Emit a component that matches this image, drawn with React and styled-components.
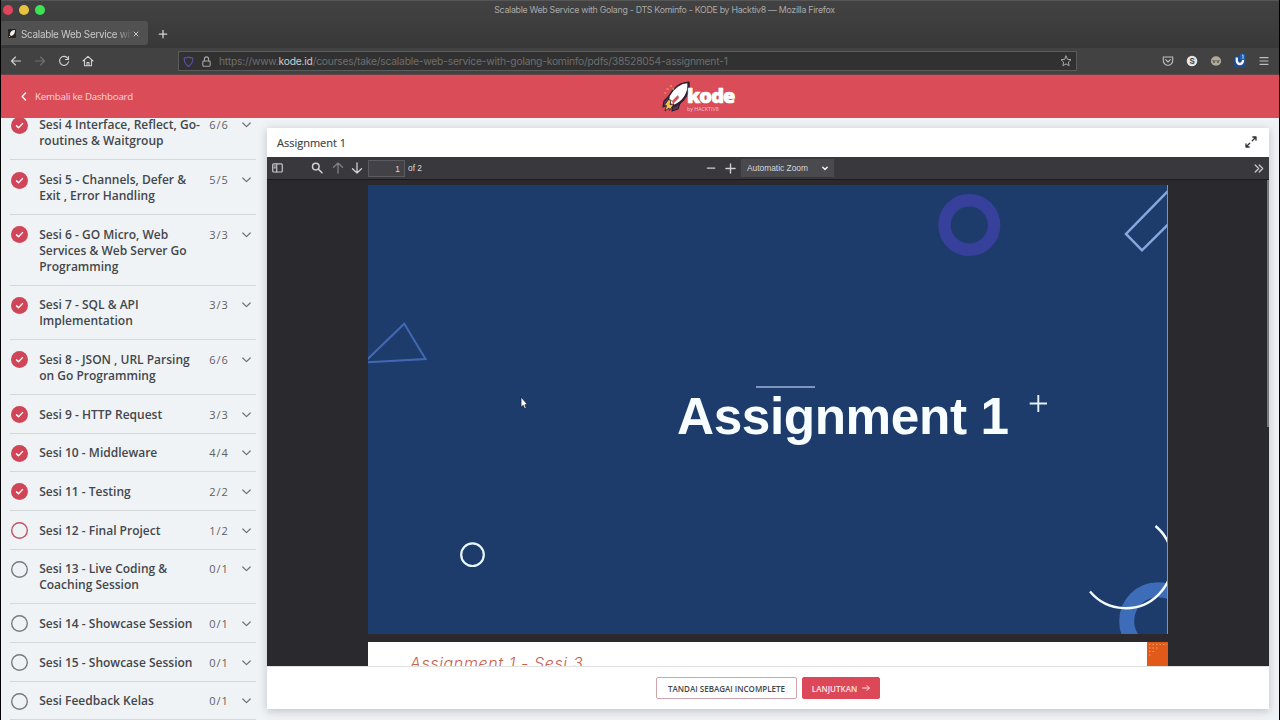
import React from "react";
import styled, { createGlobalStyle, css } from "styled-components";

const GlobalStyle = createGlobalStyle`
  *, *::before, *::after { box-sizing: border-box; }
  body { margin: 0; background: #000; font-family: "Open Sans", "Noto Sans", sans-serif; }
  svg { display: block; flex: none; }
`;

const Screen = styled.div`
  width: 1280px;
  height: 720px;
  overflow: hidden;
  display: flex;
  flex-direction: column;
  padding: 0 1px;
  background: #000;
`;

/* Browser window chrome */
const TitleBar = styled.div`
  height: 21px;
  flex: none;
  display: flex;
  align-items: center;
  padding: 0 2px 3px;
  border-top: 1px solid #565656;
  background: linear-gradient(#424242, #3e3e3e);
`;
const Lights = styled.div`
  display: flex;
  gap: 6px;
  width: 120px;
`;
const Light = styled.span`
  width: 10px;
  height: 10px;
  border-radius: 50%;
  background: ${(p) => p.$color};
`;
const WindowTitle = styled.div`
  flex: 1;
  padding-right: 71px;
  text-align: center;
  font: 400 8.8px/12px Inter, sans-serif;
  letter-spacing: -0.285px;
  color: #a9a9a9;
`;
const TabStrip = styled.div`
  height: 27px;
  flex: none;
  display: flex;
  background: linear-gradient(#3e3e3e, #383838);
`;
const Tab = styled.div`
  width: 147px;
  height: 24px;
  display: flex;
  align-items: center;
  padding: 1px 5px 0 7px;
  border-radius: 0 3px 3px 0;
  background: #515151;
`;
const TabLabel = styled.div`
  width: 112px;
  margin-left: 5px;
  overflow: hidden;
  white-space: nowrap;
  font: 400 9.9px/14px Inter, sans-serif;
  letter-spacing: -0.27px;
  color: #c9c9c9;
  mask-image: linear-gradient(90deg, #000 84%, transparent 100%);
`;
const NewTab = styled.div`
  padding: 8px 0 0 10px;
`;
const NavBar = styled.div`
  height: 27px;
  flex: none;
  display: flex;
  align-items: center;
  padding: 0 9px;
  background: #424242;
  border-bottom: 1px solid #6a4548;
`;
const NavButtons = styled.div`
  width: 168px;
  display: flex;
  align-items: center;
  gap: 12px;
`;
const UrlBar = styled.div`
  width: 899px;
  height: 20px;
  display: flex;
  align-items: center;
  gap: 7px;
  padding: 0 4px;
  border: 1px solid #5c5c5c;
  background: #313131;
`;
const Url = styled.div`
  flex: 1;
  font: 400 10.3px/16px Inter, sans-serif;
  letter-spacing: -0.22px;
  color: #6e6e6e;
  white-space: nowrap;
  b { font-weight: 400; color: #cccccc; }
`;
const Extensions = styled.div`
  margin-left: auto;
  display: flex;
  align-items: center;
  gap: 12px;
`;

/* Course site */
const SiteHeader = styled.header`
  height: 43px;
  flex: none;
  display: flex;
  align-items: center;
  background: #d94c58;
`;
const BackLink = styled.div`
  width: 660px;
  display: flex;
  align-items: center;
  gap: 8px;
  padding-left: 20px;
  font-size: 9.7px;
  letter-spacing: -0.2px;
  line-height: 14px;
  color: #ffd9dc;
`;
const Logo = styled.div`
  display: flex;
`;
const LogoText = styled.div`
  display: flex;
  flex-direction: column;
  margin-left: -5px;
  padding-top: 5px;
  color: #fff;
`;
const LogoName = styled.span`
  font: 800 20px/20px "Open Sans", sans-serif;
  letter-spacing: -0.9px;
  -webkit-text-stroke: 0.7px #fff;
`;
const LogoBy = styled.span`
  font: 400 5.3px/7px "Open Sans", sans-serif;
  color: #f9c3c8;
`;
const Body = styled.main`
  flex: 1;
  min-height: 0;
  display: flex;
  background: #eff2f4;
`;

const Sidebar = styled.aside`
  width: 266px;
  overflow: hidden;
  padding: 0 11px 0 9px;
  background: #f0f3f5;
`;
const SessionList = styled.div`
  margin-top: -12.3px;
`;
const SessionRow = styled.div`
  display: flex;
  align-items: flex-start;
  padding: 11.67px 0 10px 1px;
  border-bottom: 1px solid #d5d9dc;
`;
const StatusDot = styled.span`
  width: 17px;
  height: 17px;
  flex: none;
  display: flex;
  align-items: center;
  justify-content: center;
  margin: -0.5px 11.2px -0.5px 0;
  border-radius: 50%;
  ${(p) =>
    p.$status === "done"
      ? css`background: #d04557;`
      : css`box-shadow: inset 0 0 0 1.4px ${p.$status === "partial" ? "#bf5566" : "#757c81"};`}
`;
const SessionName = styled.span`
  width: 170px;
  font-weight: 600;
  font-size: 12px;
  line-height: 16px;
  color: #43474c;
  white-space: pre-line;
`;
const SessionCount = styled.span`
  width: 33.3px;
  font-size: 11px;
  line-height: 16px;
  letter-spacing: 1px;
  color: #5d6165;
`;
const ChevronBox = styled.span`
  padding-top: 5px;
`;

const Panel = styled.section`
  width: 1002px;
  height: 581px;
  margin-top: 10px;
  display: flex;
  flex-direction: column;
  background: #fff;
  box-shadow: 0 2px 8px rgba(60, 70, 80, 0.28);
`;
const PanelHeader = styled.div`
  height: 29px;
  flex: none;
  display: flex;
  align-items: center;
  justify-content: space-between;
  padding: 0 12.5px 1px 10px;
  font-size: 11px;
  color: #3d4145;
  -webkit-text-stroke: 0.15px #3d4145;
`;
const PdfToolbar = styled.div`
  height: 23px;
  flex: none;
  display: flex;
  align-items: center;
  padding: 0 5px;
  background: #38383d;
  border-bottom: 1.5px solid #1b1b1e;
  font: 400 8.4px/12px "Liberation Sans", sans-serif;
  color: #d8d8da;
`;
const ToolGroup = styled.div`
  display: flex;
  align-items: center;
  width: ${(p) => p.$width}px;
`;
const PageInput = styled.div`
  width: 37px;
  height: 17px;
  margin: 0 3px 0 5px;
  padding: 2px 4px 0 0;
  text-align: right;
  border: 1px solid #5b5b61;
  background: #414146;
`;
const ZoomSelect = styled.div`
  width: 93px;
  height: 18px;
  display: flex;
  align-items: center;
  justify-content: space-between;
  margin-left: 5px;
  padding: 0 6px;
  background: #49494e;
`;
const MoreTools = styled.div`
  margin-left: auto;
`;
const Viewer = styled.div`
  flex: 1;
  min-height: 0;
  display: flex;
  justify-content: space-between;
  overflow: hidden;
  background: #2a2a2e;
`;
const Pages = styled.div`
  width: 800px;
  margin-left: 101px;
  padding-top: 5px;
  display: flex;
  flex-direction: column;
  gap: 8px;
`;
const ScrollThumb = styled.div`
  width: 2px;
  height: 247px;
  background: #77777a;
`;
const NextPage = styled.div`
  height: 60px;
  flex: none;
  display: flex;
  justify-content: space-between;
  background: #fff;
`;
const NextHeading = styled.div`
  padding: 10px 0 0 42px;
  font: italic 300 16px/22px Inter, sans-serif;
  letter-spacing: 0.64px;
  color: #c4604a;
`;
const PanelFooter = styled.div`
  height: 43px;
  flex: none;
  display: flex;
  align-items: center;
  justify-content: center;
  gap: 5px;
  border-top: 1px solid #dfe1e3;
`;
const Button = styled.div`
  width: ${(p) => p.$width}px;
  height: 22px;
  display: flex;
  align-items: center;
  justify-content: center;
  gap: 5px;
  border-radius: 2px;
  border: 1px solid ${(p) => (p.$primary ? "#dc4857" : "#d0a4aa")};
  background: ${(p) => (p.$primary ? "#dc4857" : "#fff")};
  color: ${(p) => (p.$primary ? "#ffe6e8" : "#43474c")};
  font-weight: 600;
  font-size: 8px;
  white-space: nowrap;
`;
const Cursor = styled.svg`
  position: absolute;
  left: 520px;
  top: 396px;
`;

const Icon = ({ w = 12, h = w, box = "0 0 12 12", color = "#d2d2d2", sw = 1.1, children }) => (
  <svg width={w} height={h} viewBox={box} fill="none" stroke={color} strokeWidth={sw} strokeLinecap="round" strokeLinejoin="round">
    {children}
  </svg>
);

const sessions = [
  ["Sesi 4 Interface, Reflect, Go-\nroutines & Waitgroup", "6/6", "done"],
  ["Sesi 5 - Channels, Defer &\nExit , Error Handling", "5/5", "done"],
  ["Sesi 6 - GO Micro, Web\nServices & Web Server Go\nProgramming", "3/3", "done"],
  ["Sesi 7 - SQL & API\nImplementation", "3/3", "done"],
  ["Sesi 8 - JSON , URL Parsing\non Go Programming", "6/6", "done"],
  ["Sesi 9 - HTTP Request", "3/3", "done"],
  ["Sesi 10 - Middleware", "4/4", "done"],
  ["Sesi 11 - Testing", "2/2", "done"],
  ["Sesi 12 - Final Project", "1/2", "partial"],
  ["Sesi 13 - Live Coding &\nCoaching Session", "0/1", "open"],
  ["Sesi 14 - Showcase Session", "0/1", "open"],
  ["Sesi 15 - Showcase Session", "0/1", "open"],
  ["Sesi Feedback Kelas", "0/1", "open"],
];

const Rocket = () => (
  <svg width="31" height="32" viewBox="0 0 31 32" strokeLinejoin="round" strokeLinecap="round">
    <path d="M9 14 L3 20 L2 26 L8 23 Z M19 22 L17 28 L11 30 L12 24 Z" fill="#5a3555" stroke="#2a1f33" strokeWidth="1.2" />
    <path d="M27.500 1.500 C20 1 12 7 8 15 L7 22 L13 25 C23 21 28.500 12 27.500 1.500 Z" fill="#fff" stroke="#33202f" strokeWidth="1.6" />
    <path d="M27.500 1.500 C28.500 12 23 21 13 25" fill="none" stroke="#33202f" strokeWidth="2.2" />
    <path d="M17 14 L11 20 L12 23 L18 17 Z" fill="#d94c58" />
    <path d="M7 19 L3 25 L5.500 24.500 L4 30 L8 27 L8.500 29.500 L13 23 L9 23.500 L10 19.500 Z" fill="#f6c445" stroke="#33202f" strokeWidth="0.9" />
    <path d="M6 8 h1 M9.500 5 h1 M4 12 h0.800 M12 8 h0.600" stroke="#f09a55" strokeWidth="1.3" />
  </svg>
);

const CoverSlide = () => (
  <svg width="800" height="449" viewBox="368 185 800 449">
    <rect x="368" y="185" width="800" height="449" fill="#1d3c6c" />
    <circle cx="969.3" cy="225" r="24.8" fill="none" stroke="#37409a" strokeWidth="12.500" />
    <path d="M1172 187 L1126 234 L1142 250.300 L1172 220.500" fill="none" stroke="#86a8dd" strokeWidth="2.500" />
    <path d="M404.300 323.700 L425.500 359 L364 362.600 Z" fill="none" stroke="#4268b2" strokeWidth="2" />
    <circle cx="1158" cy="621" r="31.300" fill="none" stroke="#3d6db9" strokeWidth="15" />
    <path d="M1090 591.500 A46.500 46.500 0 1 0 1155.500 526" fill="none" stroke="#f4fcff" strokeWidth="2.400" />
    <circle cx="472.500" cy="554.700" r="11.300" fill="none" stroke="#e9f8ff" strokeWidth="2.200" />
    <path d="M756 387 H815" stroke="#9fb4d6" strokeWidth="1.300" />
    <path d="M1029.700 403.500 H1047 M1038.300 395 V412" stroke="#e4f1fb" strokeWidth="1.900" />
    <text x="677" y="433.500" fill="#f8fdff" fontFamily="Liberation Sans, sans-serif" fontWeight="700" fontSize="51.300" letterSpacing="-0.4">Assignment 1</text>
    <path d="M1167.500 185 V634" stroke="#8194b3" strokeWidth="1" />
  </svg>
);

export default function App() {
  return (
    <Screen>
      <GlobalStyle />
      <TitleBar>
        <Lights>
          <Light $color="#e0455c" />
          <Light $color="#e8c23f" />
          <Light $color="#3ee355" />
        </Lights>
        <WindowTitle>Scalable Web Service with Golang - DTS Kominfo - KODE by Hacktiv8 — Mozilla Firefox</WindowTitle>
      </TitleBar>
      <TabStrip>
        <Tab>
          <svg width="8" height="9" viewBox="0 0 8 9">
            <rect width="8" height="9" rx="1" fill="#2a2522" />
            <path d="M7 1 C4 1 2 3 1.800 5.500 L3.500 7 C6 6 7 4 7 1 Z" fill="#f6f1e8" />
            <path d="M1 8 L2.500 6.500" stroke="#e8b04a" />
          </svg>
          <TabLabel>Scalable Web Service with Golang</TabLabel>
          <Icon w={6} color="#c8c8c8" sw={2}><path d="M2 2 L10 10 M10 2 L2 10" /></Icon>
        </Tab>
        <NewTab>
          <Icon w={10} color="#d6d6d6" sw={1.5}><path d="M6 1.500 V10.500 M1.500 6 H10.500" /></Icon>
        </NewTab>
      </TabStrip>
      <NavBar>
        <NavButtons>
          <Icon><path d="M10.500 6 H1.500 M5.500 2 L1.500 6 L5.500 10" /></Icon>
          <Icon color="#717171"><path d="M1.500 6 H10.500 M6.500 2 L10.500 6 L6.500 10" /></Icon>
          <Icon><path d="M9.700 3.200 A4.500 4.500 0 1 0 10.500 6.500 M10.500 1.500 V4.500 H7.500" /></Icon>
          <Icon><path d="M1 6 L6 1.300 L11 6 M2.500 5 V10.800 H9.500 V5 M5 10.500 V7.500 H7 V10.500" /></Icon>
        </NavButtons>
        <UrlBar>
          <Icon w={11} color="#5652a0" sw={1.3}><path d="M6 1 C8 2 9.500 2 10.700 2.200 C10.800 7 9.500 9.500 6 11.300 C2.500 9.500 1.200 7 1.300 2.200 C2.500 2 4 2 6 1 Z" /></Icon>
          <Icon w={11} color="#a5a5a5" sw={1.2}><rect x="2" y="5.500" width="8" height="5.700" rx="1" /><path d="M3.700 5.500 V3.500 A2.300 2.500 0 0 1 8.300 3.500 V5.500" /></Icon>
          <Url>https://www.<b>kode.id</b>/courses/take/scalable-web-service-with-golang-kominfo/pdfs/38528054-assignment-1</Url>
          <Icon color="#a9a9a9" sw={1}><path d="M6 1 L7.500 4.300 L11 4.700 L8.400 7.100 L9.100 10.700 L6 8.900 L2.900 10.700 L3.600 7.100 L1 4.700 L4.500 4.300 Z" /></Icon>
        </UrlBar>
        <Extensions>
          <Icon color="#c0c0c0"><path d="M1.300 2 H10.700 V5.500 A4.700 4.700 0 0 1 1.300 5.500 Z M3.700 4.700 L6 7 L8.300 4.700" /></Icon>
          <svg width="12" height="12" viewBox="0 0 12 12">
            <circle cx="6" cy="6" r="5.300" fill="#e4e4e4" />
            <text x="6" y="8.800" textAnchor="middle" fontFamily="Inter, sans-serif" fontWeight="700" fontSize="8" fill="#444">S</text>
          </svg>
          <svg width="12" height="12" viewBox="0 0 12 12">
            <ellipse cx="6" cy="6" rx="5.200" ry="4.700" fill="#b1aa9b" />
            <path d="M1.500 5.500 H10.500" stroke="#7d766c" strokeWidth="0.800" />
            <circle cx="4" cy="6.700" r="1.200" fill="#69635b" />
            <circle cx="8" cy="6.700" r="1.200" fill="#69635b" />
          </svg>
          <svg width="12" height="14" viewBox="0 0 12 14">
            <rect y="2" width="12" height="12" rx="3" fill="#234b86" />
            <path d="M2.800 3.500 V7 A3.200 4 0 0 0 9 7 V5.500" fill="none" stroke="#f0f6ff" strokeWidth="2.300" />
            <rect x="6" y="0" width="5" height="6" fill="#205da8" />
            <path d="M8 1.500 L9 0.800 V5" fill="none" stroke="#bfe0ff" strokeWidth="0.900" />
          </svg>
          <Icon color="#bdbdbd" sw={1.2}><path d="M2 2.700 H10 M2 6 H10 M2 9.300 H10" /></Icon>
        </Extensions>
      </NavBar>

      <SiteHeader>
        <BackLink>
          <Icon w={6} h={9} box="0 0 6 9" color="#fff" sw={1.4}><path d="M4.500 1 L1.200 4.500 L4.500 8" /></Icon>
          Kembali ke Dashboard
        </BackLink>
        <Logo>
          <Rocket />
          <LogoText>
            <LogoName>kode</LogoName>
            <LogoBy>by HACKTIV8</LogoBy>
          </LogoText>
        </Logo>
      </SiteHeader>

      <Body>
        <Sidebar>
          <SessionList>
            {sessions.map(([name, count, status]) => (
              <SessionRow key={name}>
                <StatusDot $status={status}>
                  {status === "done" && (
                    <Icon w={9} color="#fff" sw={1.9}><path d="M2 6.500 L4.700 9 L10 3.500" /></Icon>
                  )}
                </StatusDot>
                <SessionName>{name}</SessionName>
                <SessionCount>{count}</SessionCount>
                <ChevronBox>
                  <Icon w={9} h={6} box="0 0 9 6" color="#6d7276" sw={1.2}><path d="M0.800 1 L4.500 4.700 L8.200 1" /></Icon>
                </ChevronBox>
              </SessionRow>
            ))}
          </SessionList>
        </Sidebar>

        <Panel>
          <PanelHeader>
            Assignment 1
            <Icon w={12} color="#2f3336" sw={1.3}><path d="M7.300 4.700 L11 1 M7.800 1 H11 V4.200 M4.700 7.300 L1 11 M1 7.800 V11 H4.200" /></Icon>
          </PanelHeader>
          <PdfToolbar>
            <ToolGroup $width={434}>
              <Icon w={11} h={10} box="0 0 11 10" color="#c6c6c8" sw={1.2}><rect x="0.700" y="0.800" width="9.600" height="8.200" rx="1" /><path d="M4.700 1 V9 M2 3 H3.300 M2 4.800 H3.300" /></Icon>
              <svg width="28" height="1" />
              <Icon w={12} color="#d0d0d2" sw={1.5}><circle cx="4.800" cy="4.600" r="3.300" /><path d="M7.300 7.100 L11 10.700" /></Icon>
              <svg width="9" height="1" />
              <Icon w={12} color="#808085" sw={1.3}><path d="M6 11 V1 M1.500 5.300 L6 1 L10.500 5.300" /></Icon>
              <svg width="7" height="1" />
              <Icon w={12} color="#d0d0d2" sw={1.3}><path d="M6 1 V11 M1.500 6.700 L6 11 L10.500 6.700" /></Icon>
              <PageInput>1</PageInput>
              of 2
            </ToolGroup>
            <ToolGroup $width={135}>
              <Icon w={10} color="#d0d0d2" sw={1.5}><path d="M1.500 6 H10.500" /></Icon>
              <svg width="9" height="1" />
              <Icon w={11} color="#d0d0d2" sw={1.5}><path d="M1 6 H11 M6 1 V11" /></Icon>
              <ZoomSelect>
                Automatic Zoom
                <Icon w={6} h={5} box="0 0 6 5" color="#f0f0f0" sw={1.5}><path d="M0.800 1.200 L3 3.500 L5.200 1.200" /></Icon>
              </ZoomSelect>
            </ToolGroup>
            <MoreTools>
              <Icon w={10} h={9} box="0 0 10 9" color="#c8c8ca" sw={1.3}><path d="M1.200 1 L4.700 4.500 L1.200 8 M5.200 1 L8.700 4.500 L5.200 8" /></Icon>
            </MoreTools>
          </PdfToolbar>
          <Viewer>
            <Pages>
              <CoverSlide />
              <NextPage>
                <NextHeading>Assignment 1 - Sesi 3</NextHeading>
                <svg width="21" height="60" viewBox="0 0 21 60">
                  <rect width="21" height="60" fill="#e15a1a" />
                  <path d="M2 2.500 H20 M2 6 H12 M2 9.500 H9 M2 13 H5" stroke="#f0a06e" strokeWidth="1" strokeDasharray="1.500 2" />
                </svg>
              </NextPage>
            </Pages>
            <ScrollThumb />
          </Viewer>
          <PanelFooter>
            <Button $width={141}>TANDAI SEBAGAI INCOMPLETE</Button>
            <Button $width={78} $primary>
              LANJUTKAN
              <Icon w={8} h={8} color="#ffe6e8" sw={1.5}><path d="M1 6 H11 M7.500 2.500 L11 6 L7.500 9.500" /></Icon>
            </Button>
          </PanelFooter>
        </Panel>
      </Body>
      <Cursor width="8" height="14" viewBox="0 0 8 14">
        <path d="M1 1 V11.300 L3.200 9.300 L4.700 12.800 L6.300 12 L4.900 8.800 L7.500 8.500 Z" fill="#fff" stroke="#14233c" strokeWidth="0.800" />
      </Cursor>
    </Screen>
  );
}
